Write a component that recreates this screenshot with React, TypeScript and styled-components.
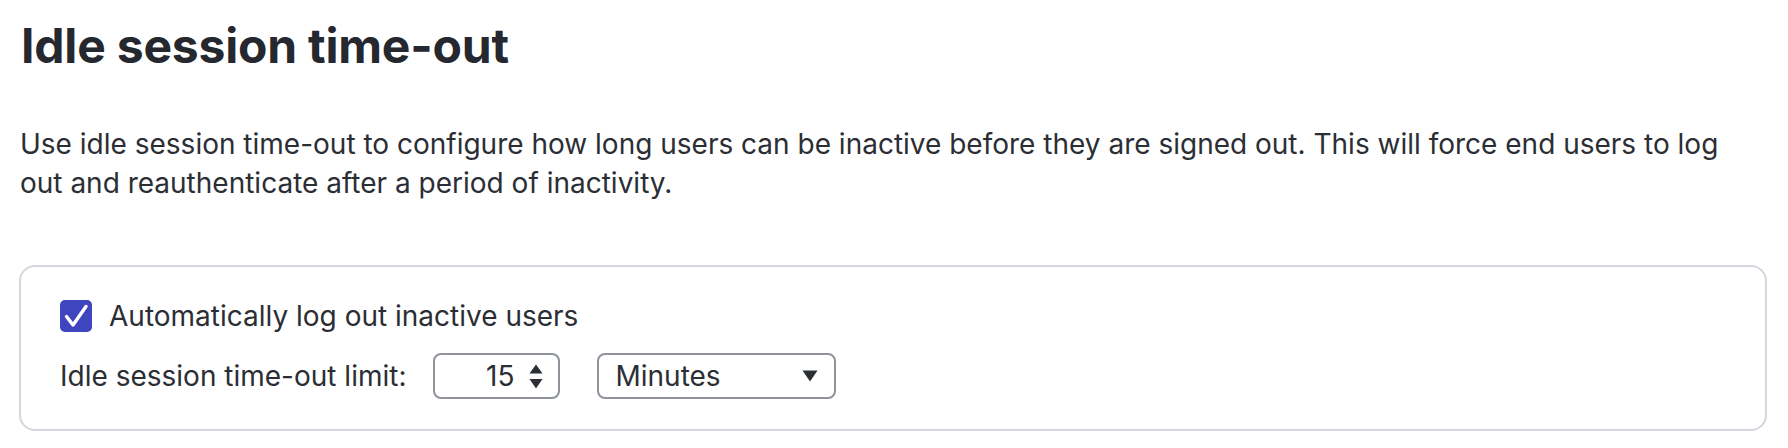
import React from 'react';
import styled, { createGlobalStyle } from 'styled-components';

const GlobalStyle = createGlobalStyle`
  html, body {
    margin: 0;
    padding: 0;
    background: #ffffff;
  }
  body {
    font-family: Inter, "Noto Sans", "Liberation Sans", sans-serif;
    color: #2a2d34;
    -webkit-font-smoothing: antialiased;
  }
`;

const Page = styled.div`
  width: 1788px;
  padding: 17px 21px 0 19px;
  box-sizing: border-box;
`;

const Title = styled.h1`
  margin: 0 0 0 2px;
  font-size: 48px;
  line-height: 58px;
  font-weight: 700;
  letter-spacing: -0.2px;
  color: #25282e;
`;

const Description = styled.p`
  margin: 50px 0 0 1px;
  font-size: 28px;
  line-height: 39px;
  font-weight: 400;
  color: #2b2e35;
`;

const Panel = styled.section`
  margin-top: 62px;
  border: 2px solid #d4d7dd;
  border-radius: 16px;
  padding: 33px 39px 30px;
  display: flex;
  flex-direction: column;
  gap: 21px;
`;

const Row = styled.div`
  display: flex;
  align-items: center;
`;

const CheckRow = styled.label`
  display: flex;
  align-items: center;
  gap: 17px;
  font-size: 28px;
  line-height: 32px;
  color: #2b2e35;
`;

const CheckBox = styled.span<{ checked: boolean }>`
  width: 32px;
  height: 32px;
  border-radius: 5px;
  box-sizing: border-box;
  background: ${(p) => (p.checked ? '#3f45bf' : '#ffffff')};
  border: ${(p) => (p.checked ? 'none' : '2px solid #8f939c')};
  display: flex;
  align-items: center;
  justify-content: center;
  flex-shrink: 0;
`;

const FieldLabel = styled.span`
  font-size: 28px;
  line-height: 46px;
  color: #2b2e35;
  margin-right: 27px;
`;

const Field = styled.div<{ width: number }>`
  width: ${(p) => p.width}px;
  height: 46px;
  box-sizing: border-box;
  border: 2px solid #8f939c;
  border-radius: 8px;
  display: flex;
  align-items: center;
  font-size: 28px;
  color: #2b2e35;
  background: #ffffff;
`;

const NumberField = styled(Field)`
  justify-content: flex-end;
  padding-right: 15px;
  margin-right: 37px;
  gap: 15px;
`;

const SelectField = styled(Field)`
  justify-content: space-between;
  padding: 0 16px 0 16px;
`;

const Check = () => (
  <svg width="32" height="32" viewBox="0 0 32 32" fill="none">
    <path
      d="M6.5 16.5 L13 25 L26 6.5"
      stroke="#ffffff"
      strokeWidth="3.4"
      strokeLinecap="round"
      strokeLinejoin="round"
    />
  </svg>
);

const Spinner = () => (
  <svg width="14" height="25" viewBox="0 0 14 25">
    <path d="M7 0.5 L13.5 9.5 L0.5 9.5 Z" fill="#2b2e35" />
    <path d="M0.5 15 L13.5 15 L7 24.5 Z" fill="#2b2e35" />
  </svg>
);

const Caret = () => (
  <svg width="16" height="12" viewBox="0 0 16 12">
    <path d="M0.5 0.5 L15.5 0.5 L8 11.5 Z" fill="#2b2e35" />
  </svg>
);

export default function App() {
  return (
    <Page>
      <GlobalStyle />
      <Title>Idle session time-out</Title>
      <Description>
        Use idle session time-out to configure how long users can be inactive before they are signed out. This
        will force end users to log out and reauthenticate after a period of inactivity.
      </Description>
      <Panel>
        <CheckRow>
          <CheckBox checked>
            <Check />
          </CheckBox>
          Automatically log out inactive users
        </CheckRow>
        <Row>
          <FieldLabel>Idle session time-out limit:</FieldLabel>
          <NumberField width={127}>
            <span>15</span>
            <Spinner />
          </NumberField>
          <SelectField width={239}>
            <span>Minutes</span>
            <Caret />
          </SelectField>
        </Row>
      </Panel>
    </Page>
  );
}
